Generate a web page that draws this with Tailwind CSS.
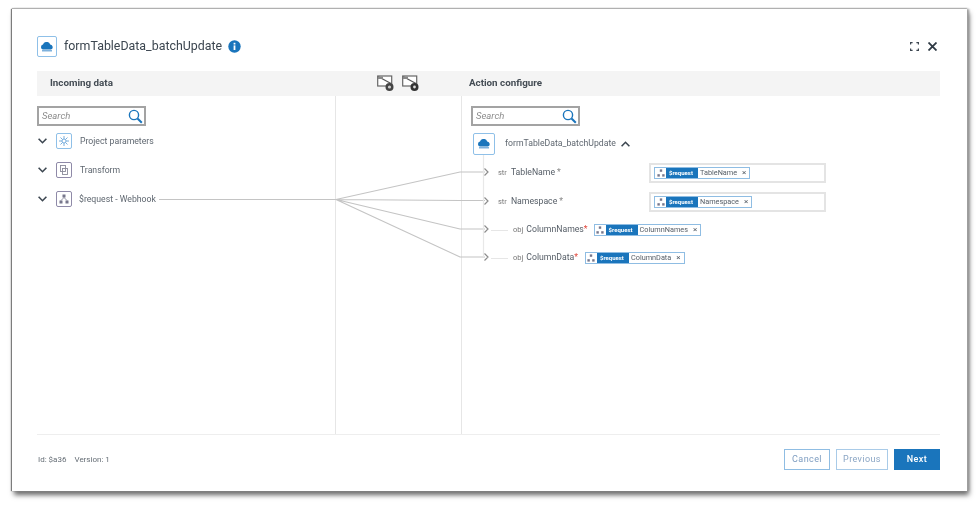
<!DOCTYPE html>
<html lang="en">
<head>
    <meta charset="UTF-8">
    <title>formTableData_batchUpdate</title>
    <script src="https://cdn.jsdelivr.net/npm/@tailwindcss/browser@4"></script>
</head>
<body class="bg-white font-['Roboto',sans-serif] w-[978px] h-[508px] overflow-hidden">
<div class="pl-[12px] pt-[9px]">
    <!-- dialog -->
    <div class="w-[955px] h-[482px] bg-white pl-[25px] pr-[27px] pt-[27px] blur-[0.5px] shadow-[-1px_0_1px_#7c7c7c,0_-1px_1px_#bbbbbb,2px_0_2px_#999999,2px_4px_5px_#666666]">
        <!-- title -->
        <div class="flex items-center h-[21px]">
            <div class="w-[20px] h-[21px] rounded-[2px] border border-[#8fc0e8] flex items-center justify-center">
                <svg width="14" height="10" viewBox="0 0 14 10"><path d="M2.8 7.6A2.6 2.6 0 0 1 3 2.6 3.8 3.8 0 0 1 10.2 2.4 2.7 2.7 0 0 1 11 7.6z" fill="#1a75bc"/><rect x="2" y="8.2" width="10" height="1.2" fill="#5f9fd4"/></svg>
            </div>
            <span class="ml-[7px] text-[12.4px] text-[#3c4650]">formTableData_batchUpdate</span>
            <svg class="ml-[6px]" width="13" height="13" viewBox="0 0 13 13"><circle cx="6.5" cy="6.5" r="6.2" fill="#1a75bc"/><rect x="5.6" y="5.4" width="1.8" height="4.6" fill="#fff"/><rect x="5.6" y="2.8" width="1.8" height="1.7" fill="#fff"/></svg>
            <svg class="ml-auto" width="9" height="9" viewBox="0 0 9 9" fill="none" stroke="#3c4650" stroke-width="1.2"><path d="M.6 2.6V.6H2.6M6.4 .6h2V2.6M.6 6.4v2H2.6M6.4 8.4h2V6.4"/></svg>
            <svg class="ml-[9px] mr-[3px]" width="9" height="9" viewBox="0 0 9 9" fill="none" stroke="#2f3a44" stroke-width="1.8"><path d="M.5.5l8 8M8.5.5l-8 8"/></svg>
        </div>
        <!-- band -->
        <div class="mt-[14px] h-[25px] bg-[#f4f4f4] flex items-center text-[9.8px] font-bold text-[#444c54]">
            <span class="ml-[13px] w-[327px]">Incoming data</span>
            <svg width="18" height="17" viewBox="0 0 18 17" fill="none"><rect x=".7" y="1" width="14" height="10" fill="#fff" stroke="#666" stroke-width="1.2"/><path d="M1 1.5l13 7" stroke="#555" stroke-width="1.2"/><rect x="1" y="1.5" width="5" height="2.5" fill="#888"/><circle cx="12.5" cy="12" r="4" fill="#444"/><circle cx="12.5" cy="12" r="1.6" fill="#ccc"/></svg>
            <svg class="ml-[7px]" width="18" height="17" viewBox="0 0 18 17" fill="none"><rect x=".7" y="1" width="14" height="10" fill="#fff" stroke="#666" stroke-width="1.2"/><path d="M1 1.5l13 7" stroke="#555" stroke-width="1.2"/><rect x="1" y="1.5" width="5" height="2.5" fill="#888"/><circle cx="12.5" cy="12" r="4" fill="#333"/><circle cx="12.5" cy="12" r="1.4" fill="#ddd"/></svg>
            <span class="ml-[49px]">Action configure</span>
        </div>
        <!-- body -->
        <div class="relative h-[339px] flex border-b border-[#eeeeee]">
            <!-- incoming -->
            <div class="w-[299px] border-r border-[#e6e6e6] pt-[10px]">
                <div class="w-[109px] h-[20px] border-2 border-[#a3a3a3] flex items-center justify-between pl-[3px] pr-[1px]">
                    <span class="text-[9.5px] italic text-[#8b8b8b]">Search</span>
                    <svg width="15" height="15" viewBox="0 0 15 15" fill="none"><circle cx="6" cy="6" r="4.6" stroke="#1a75bc" stroke-width="1.4"/><path d="M9.5 9.5l4.3 4.3" stroke="#1a75bc" stroke-width="2"/></svg>
                </div>
                <div class="flex items-center h-[29px]">
                    <svg class="ml-[1px]" width="9" height="6" viewBox="0 0 9 6" fill="none" stroke="#3c4650" stroke-width="1.6"><path d="M.6.8l3.9 3.9L8.4.8"/></svg>
                    <div class="ml-[9px] w-[16px] h-[16px] rounded-[2px] border border-[#8fc0e8] flex items-center justify-center">
                        <svg width="10" height="10" viewBox="0 0 10 10" fill="none" stroke="#6aa5d8" stroke-width=".9"><circle cx="5" cy="5" r="2"/><path d="M5 0v3M5 7v3M0 5h3M7 5h3M1.5 1.5l2 2M6.5 6.5l2 2M8.5 1.5l-2 2M3.5 6.5l-2 2"/></svg>
                    </div>
                    <span class="ml-[8px] mt-[2px] text-[8.7px] text-[#5f6770]">Project parameters</span>
                </div>
                <div class="flex items-center h-[29px]">
                    <svg class="ml-[1px]" width="9" height="6" viewBox="0 0 9 6" fill="none" stroke="#3c4650" stroke-width="1.6"><path d="M.6.8l3.9 3.9L8.4.8"/></svg>
                    <div class="ml-[9px] w-[16px] h-[16px] rounded-[2px] border border-[#8f8aa8] flex items-center justify-center">
                        <svg width="10" height="10" viewBox="0 0 10 10" fill="none" stroke="#8a8a9a" stroke-width=".9"><rect x="1.5" y=".5" width="5" height="6"/><rect x="3.5" y="3.5" width="5" height="6"/></svg>
                    </div>
                    <span class="ml-[8px] mt-[2px] text-[8.7px] text-[#5f6770]">Transform</span>
                </div>
                <div class="flex items-center h-[29px]">
                    <svg class="ml-[1px]" width="9" height="6" viewBox="0 0 9 6" fill="none" stroke="#3c4650" stroke-width="1.6"><path d="M.6.8l3.9 3.9L8.4.8"/></svg>
                    <div class="ml-[9px] w-[16px] h-[16px] rounded-[2px] border border-[#8f8aa8] flex items-center justify-center">
                        <svg width="10" height="10" viewBox="0 0 10 10" fill="#77778c"><rect x="3.5" y=".5" width="3" height="3"/><rect x=".5" y="6.5" width="3" height="3"/><rect x="6.5" y="6.5" width="3" height="3"/><path d="M5 3.5L2 6.5M5 3.5l3 3" stroke="#77778c" stroke-width=".8"/></svg>
                    </div>
                    <span class="ml-[7px] mt-[2px] text-[8.7px] text-[#5f6770]">$request - Webhook</span>
                </div>
            </div>
            <!-- links column -->
            <div class="w-[126px] border-r border-[#e6e6e6]"></div>
            <!-- action configure -->
            <div class="flex-1 pt-[10px]">
                <div class="ml-[9px] w-[109px] h-[20px] border-2 border-[#a3a3a3] flex items-center justify-between pl-[3px] pr-[1px]">
                    <span class="text-[9.5px] italic text-[#8b8b8b]">Search</span>
                    <svg width="15" height="15" viewBox="0 0 15 15" fill="none"><circle cx="6" cy="6" r="4.6" stroke="#1a75bc" stroke-width="1.4"/><path d="M9.5 9.5l4.3 4.3" stroke="#1a75bc" stroke-width="2"/></svg>
                </div>
                <div class="mt-[7px] ml-[11px] flex items-center h-[22px]">
                    <div class="w-[22px] h-[22px] rounded-[2px] border border-[#8fc0e8] flex items-center justify-center">
                        <svg width="14" height="10" viewBox="0 0 14 10"><path d="M2.8 7.6A2.6 2.6 0 0 1 3 2.6 3.8 3.8 0 0 1 10.2 2.4 2.7 2.7 0 0 1 11 7.6z" fill="#1a75bc"/><rect x="2" y="8.2" width="10" height="1.2" fill="#5f9fd4"/></svg>
                    </div>
                    <span class="ml-[10px] text-[8.7px] text-[#5f6770]">formTableData_batchUpdate</span>
                    <svg class="ml-[5px]" width="9" height="6" viewBox="0 0 9 6" fill="none" stroke="#3c4650" stroke-width="1.6"><path d="M.6 5.2l3.9-3.9 3.9 3.9"/></svg>
                </div>
                <div class="mt-[3px] relative">
                    <div class="flex items-center h-[29px]">
                        <span class="w-[187px] flex items-center">
                            <span class="ml-[36px] text-[7.5px] text-[#777]">str</span>
                            <span class="ml-[4px] text-[8.7px] text-[#555d66]">TableName</span>
                            <span class="ml-[2px] text-[8.7px] text-[#888]">*</span>
                        </span>
                        <div class="w-[177px] h-[20px] border-2 border-[#e4e4e4] flex items-center pl-[3px]">
                            <div class="flex items-center h-[12px] border border-[#8fbde3]">
                                <span class="w-[11px] flex justify-center"><svg width="8" height="8" viewBox="0 0 10 10" fill="#77778c"><rect x="3.5" y=".5" width="3" height="3"/><rect x=".5" y="6.5" width="3" height="3"/><rect x="6.5" y="6.5" width="3" height="3"/></svg></span>
                                <span class="w-[32px] h-full bg-[#1a75bc] text-white text-[6px] leading-none font-bold flex items-center pl-[3px]">$request</span>
                                <span class="ml-[2px] text-[7.3px] leading-none text-[#555d66]">TableName</span>
                                <span class="ml-[5px] mr-[3px] text-[8px] leading-none text-[#555d66]">×</span>
                            </div>
                        </div>
                    </div>
                    <div class="flex items-center h-[29px]">
                        <span class="w-[187px] flex items-center">
                            <span class="ml-[36px] text-[7.5px] text-[#777]">str</span>
                            <span class="ml-[4px] text-[8.7px] text-[#555d66]">Namespace</span>
                            <span class="ml-[2px] text-[8.7px] text-[#888]">*</span>
                        </span>
                        <div class="w-[177px] h-[20px] border-2 border-[#e4e4e4] flex items-center pl-[3px]">
                            <div class="flex items-center h-[12px] border border-[#8fbde3]">
                                <span class="w-[11px] flex justify-center"><svg width="8" height="8" viewBox="0 0 10 10" fill="#77778c"><rect x="3.5" y=".5" width="3" height="3"/><rect x=".5" y="6.5" width="3" height="3"/><rect x="6.5" y="6.5" width="3" height="3"/></svg></span>
                                <span class="w-[32px] h-full bg-[#1a75bc] text-white text-[6px] leading-none font-bold flex items-center pl-[3px]">$request</span>
                                <span class="ml-[2px] text-[7.3px] leading-none text-[#555d66]">Namespace</span>
                                <span class="ml-[5px] mr-[3px] text-[8px] leading-none text-[#555d66]">×</span>
                            </div>
                        </div>
                    </div>
                    <div class="flex items-center h-[28px]">
                        <span class="ml-[29px] w-[17px] h-px bg-[#e6e6e6]"></span>
                        <span class="ml-[5px] text-[7.5px] text-[#777]">obj</span>
                        <span class="ml-[3px] text-[8.7px] text-[#555d66]">ColumnNames</span>
                        <span class="text-[8.7px] text-[#e0473c]">*</span>
                        <div class="ml-[6px] flex items-center h-[12px] border border-[#8fbde3]">
                            <span class="w-[11px] flex justify-center"><svg width="8" height="8" viewBox="0 0 10 10" fill="#77778c"><rect x="3.5" y=".5" width="3" height="3"/><rect x=".5" y="6.5" width="3" height="3"/><rect x="6.5" y="6.5" width="3" height="3"/></svg></span>
                            <span class="w-[32px] h-full bg-[#1a75bc] text-white text-[6px] leading-none font-bold flex items-center pl-[3px]">$request</span>
                            <span class="ml-[2px] text-[7.3px] leading-none text-[#555d66]">ColumnNames</span>
                            <span class="ml-[5px] mr-[3px] text-[8px] leading-none text-[#555d66]">×</span>
                        </div>
                    </div>
                    <div class="flex items-center h-[28px]">
                        <span class="ml-[29px] w-[17px] h-px bg-[#e6e6e6]"></span>
                        <span class="ml-[5px] text-[7.5px] text-[#777]">obj</span>
                        <span class="ml-[3px] text-[8.7px] text-[#555d66]">ColumnData</span>
                        <span class="text-[8.7px] text-[#e0473c]">*</span>
                        <div class="ml-[7px] flex items-center h-[12px] border border-[#8fbde3]">
                            <span class="w-[11px] flex justify-center"><svg width="8" height="8" viewBox="0 0 10 10" fill="#77778c"><rect x="3.5" y=".5" width="3" height="3"/><rect x=".5" y="6.5" width="3" height="3"/><rect x="6.5" y="6.5" width="3" height="3"/></svg></span>
                            <span class="w-[32px] h-full bg-[#1a75bc] text-white text-[6px] leading-none font-bold flex items-center pl-[3px]">$request</span>
                            <span class="ml-[2px] text-[7.3px] leading-none text-[#555d66]">ColumnData</span>
                            <span class="ml-[5px] mr-[3px] text-[8px] leading-none text-[#555d66]">×</span>
                        </div>
                    </div>
                </div>
            </div>
            <!-- mapping lines, origin is the body's top left (37,96) -->
            <svg class="absolute left-0 top-0 pointer-events-none" width="903" height="339" fill="none" stroke="#c4c4c4" stroke-width="1.2">
                <path d="M122 103.5H299L423 76H448M299 103.5L423 104.5H448M299 103.5L423 133H448M299 103.5L423 161H448"/>
                <path d="M446.5 59V161" stroke="#e8e8e8"/>
                <path d="M447.5 72.5l3.5 3.5-3.5 3.5M447.5 101.5l3.5 3.5-3.5 3.5M447.5 129.5l3.5 3.5-3.5 3.5M447.5 157.5l3.5 3.5-3.5 3.5" stroke="#8c8c8c"/>
            </svg>
        </div>
        <!-- footer -->
        <div class="mt-[14px] flex items-center h-[21px]">
            <span class="ml-[1px] text-[8px] text-[#666e76]">Id: $a36</span>
            <span class="ml-[8px] text-[8px] text-[#666e76]">Version: 1</span>
            <button class="ml-auto w-[46px] h-[21px] border-[1.5px] border-[#8fbde3] text-[9px] tracking-[0.4px] text-[#7d9cc0]">Cancel</button>
            <button class="ml-[6px] w-[52px] h-[21px] border-[1.5px] border-[#a9cbe8] text-[9px] tracking-[0.4px] text-[#8aa5c4]">Previous</button>
            <button class="ml-[6px] w-[46px] h-[21px] bg-[#1a75bc] text-[9px] font-medium tracking-[0.4px] text-white">Next</button>
        </div>
    </div>
</div>
</body>
</html>
